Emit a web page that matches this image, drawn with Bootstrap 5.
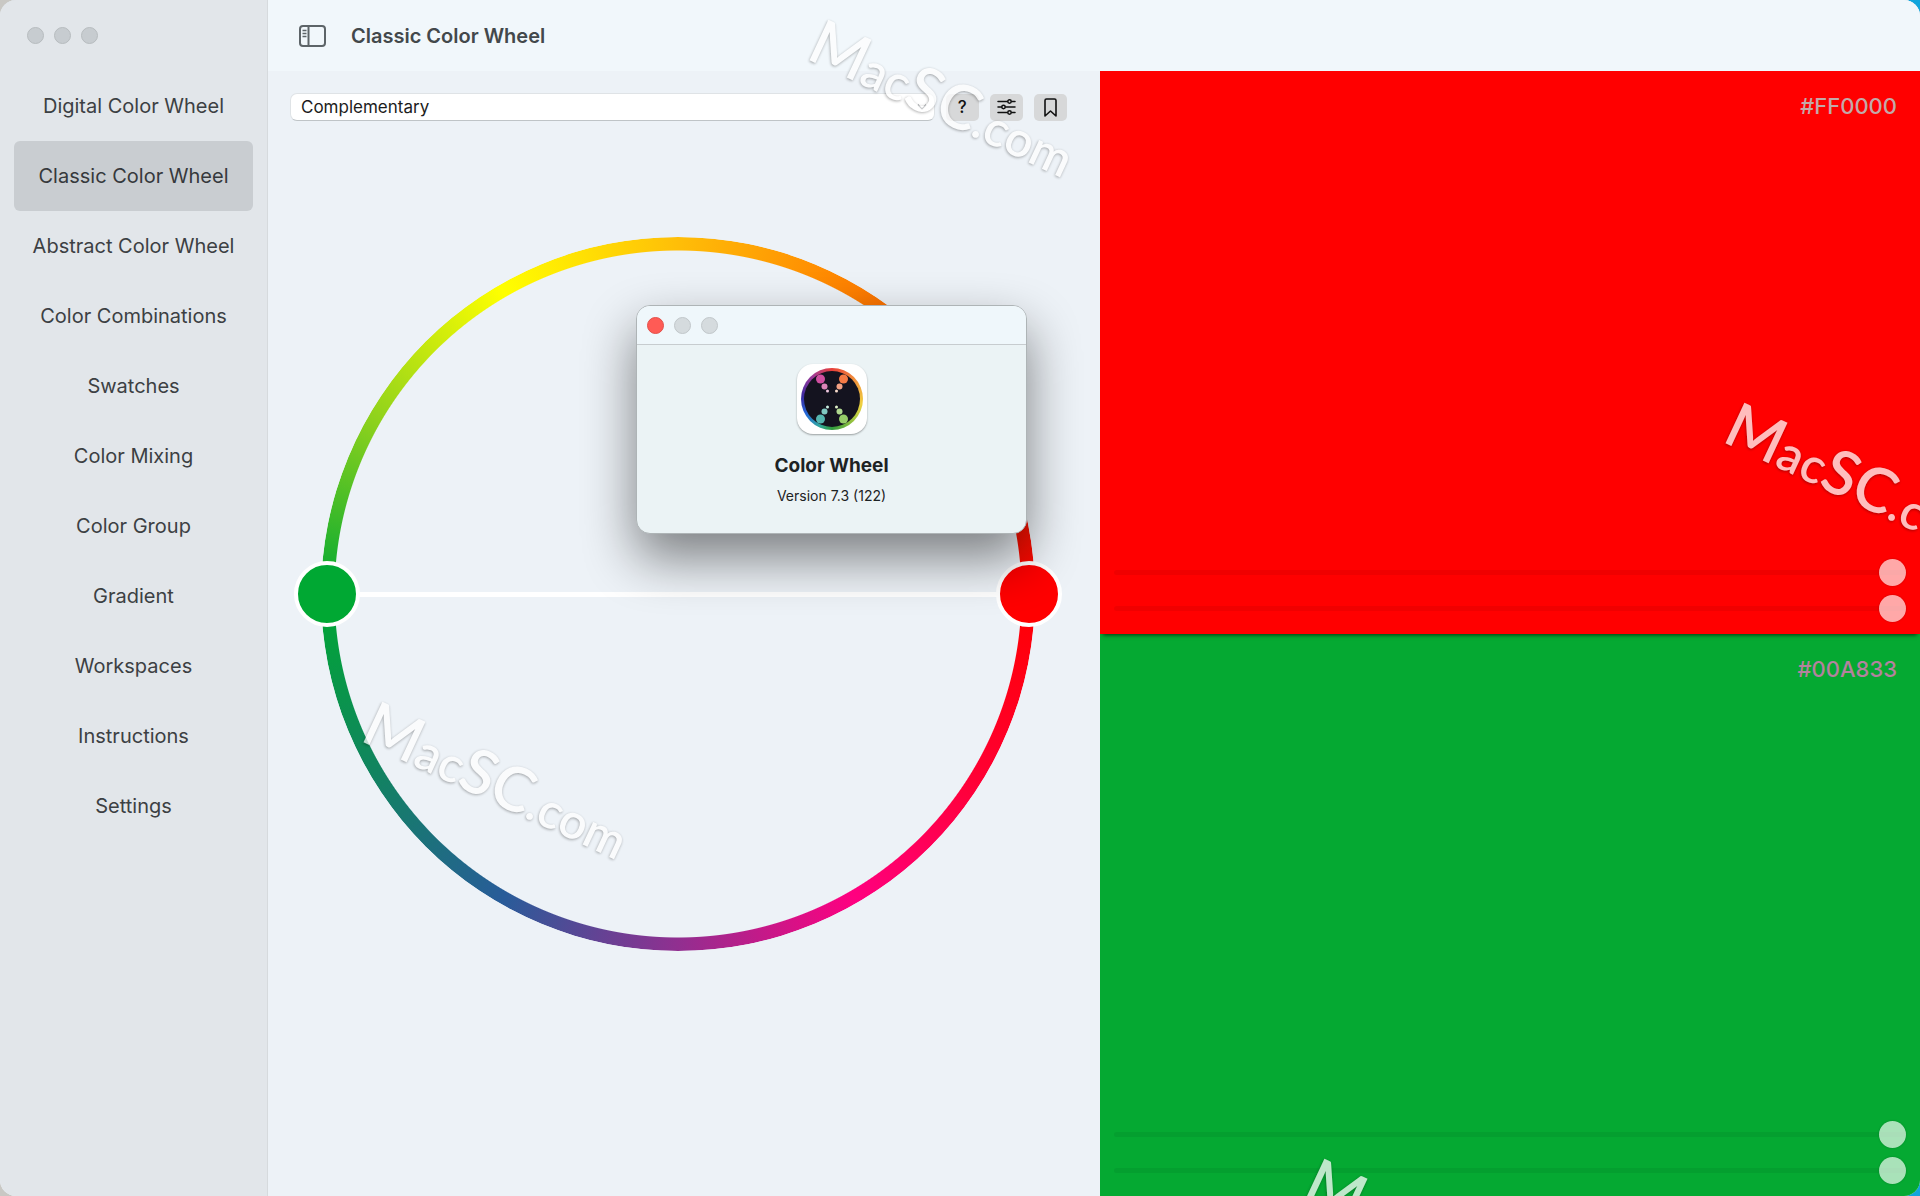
<!DOCTYPE html>
<html lang="en">
<head>
<meta charset="utf-8">
<meta name="viewport" content="width=device-width, initial-scale=1">
<title>Classic Color Wheel</title>
<link href="https://cdn.jsdelivr.net/npm/bootstrap@5.3.0/dist/css/bootstrap.min.css" rel="stylesheet">
<style>
body { font-family: Inter, "Liberation Sans", sans-serif; background: linear-gradient(90deg, #c9c8c4 50%, #12a5dc 50%); }
.app-window { border-radius: 16px; background: #edf2f7; box-shadow: inset 0 1px #d3d9dc; }
.side-pane { width: 268px; flex: none; background: #e2e6ea; border-right: 1px solid #d6dadd; padding: 0 14px; }
.light-row { gap: 10px; }
.light-row i { width: 17px; height: 17px; border-radius: 50%; background: #c7ccd0; border: 1px solid #b7bcbf; }
.side-pane .light-row { height: 71px; padding-left: 13px; }
.side-link { height: 70px; border-radius: 6px; font-size: 20px; color: #3c4043; --bs-nav-link-padding-x: 0; }
.side-link:hover { color: #202326; }
.side-link.active { background: #c9cdd1; color: #36393c; }
.title-bar { height: 71px; background: #f1f7fb; padding: 0 31px; gap: 25px; }
.title-bar h1 { font-size: 20px; font-weight: 600; color: #43484b; }
.wheel-pane { width: 50.35%; flex: none; padding: 22px 33px 22px 22px; }
.tool-row { gap: 11px; height: 28px; }
.rule-select { height: 28px; border: 1px solid #dfe3e6; border-bottom-color: #bfc4c7; border-radius: 7px; font-size: 17px; line-height: 26px; color: #1c1c1c; padding: 0 30px 0 10px; background-color: #fff; background-size: 12px 10px; background-position: right 6px center; }
.tool-btn { width: 33px; height: 27px; flex: none; background: #d7d8d9; border: 0; border-radius: 5px; color: #111; font-size: 17px; font-weight: 500; line-height: 27px; }
.wheel { width: 714px; max-width: 92%; aspect-ratio: 1; margin: 116px auto 0; }
.wheel-ring { inset: 0; border-radius: 50%;
  background: conic-gradient(from 90deg, #f00 0deg, #ff0030 30deg, #ff0080 60deg, #912f90 90deg, #285c99 120deg, #11845f 150deg, #00a833 180deg, #8fd21c 210deg, #ff0 240deg, #ffbe08 270deg, #ff8000 300deg, #e63200 330deg, #f00 360deg);
  -webkit-mask: radial-gradient(closest-side, transparent calc(100% - 14px), #000 calc(100% - 13px)); mask: radial-gradient(closest-side, transparent calc(100% - 14px), #000 calc(100% - 13px)); }
.wheel-axis { left: 7px; right: 7px; top: 50%; height: 5px; margin-top: -2px; background: #fff; }
.wheel-knob { width: 66px; height: 66px; border: 4px solid #fff; border-radius: 50%; padding: 0; top: 50%; margin-top: -33px; }
.knob-a { left: -27px; background: #00a833; }
.knob-b { right: -27px; background: #f00; }
.about-box { left: 368px; top: 234px; width: 391px; height: 229px; border: 1px solid #aeb4b6; border-radius: 14px; background: #ebf3f5; box-shadow: 0 24px 52px rgba(0,0,0,.48); color: #1d2224; }
.about-box .light-row { height: 39px; padding-left: 10px; background: #eff7fb; border-bottom: 1px solid #c7cccf; border-radius: 13px 13px 0 0; }
.about-box .light-row i { background: #d5dbde; border-color: #c1c7ca; }
.about-box .light-row i:first-child { background: #ff5b55; border-color: #e2504a; }
.about-box h2 { font-size: 19px; line-height: 24px; font-weight: 700; margin: 20px 0 8px; }
.about-box p { font-size: 14px; line-height: 20px; }
.app-icon { margin-top: 19px; width: 70px; height: 70px; border-radius: 16px; background: #fff; box-shadow: 0 1px 2px rgba(0,0,0,.35); }
.app-ring { width: 62px; height: 62px; border-radius: 50%; background: conic-gradient(#e8403a, #f08a3a 45deg, #f0d040 100deg, #a8c840 130deg, #2f9a3c 180deg, #30a8a0 205deg, #2468d8 240deg, #3a2aa0 275deg, #a03a98 320deg, #e8403a 360deg); }
.swatch { flex: 1 1 0; padding: 18px 14px 12px; }
.swatch-red { background: #f00; color: #c3a9a9; box-shadow: 0 4px 4px -3px rgba(0,0,0,.7); z-index: 1; }
.swatch-green { background: #05a932; color: #b4829f; }
.hex-code { font-size: 22px; line-height: 35px; font-weight: 500; padding-right: 9px; }
.slide { -webkit-appearance: none; appearance: none; display: block; width: 100%; height: 27px; margin: 9px 0 0; background: transparent; }
.slide::-webkit-slider-runnable-track { height: 5px; border-radius: 3px; background: rgba(0,0,0,.06); }
.slide::-webkit-slider-thumb { -webkit-appearance: none; width: 27px; height: 27px; margin-top: -11px; border-radius: 50%; background: rgba(255,255,255,.66); box-shadow: 0 0 2px rgba(0,0,0,.25); }
.stamp { font-family: Lato, sans-serif; font-weight: 600; font-size: 49px; line-height: 60px; color: #fff; opacity: .74; text-shadow: 0 1px 3px rgba(0,0,0,.45); transform: rotate(25deg); transform-origin: 0 100%; white-space: nowrap; pointer-events: none; z-index: 3; }
.stamp b { font-size: 62px; font-weight: 600; }
.stamp-1 { left: 800px; top: 3px; }
.stamp-2 { left: 354px; top: 685px; }
.stamp-3 { left: 1716px; top: 386px; }
.stamp-4 { left: 1296px; top: 1142px; }
</style>
<script src="https://cdn.jsdelivr.net/npm/bootstrap@5.3.0/dist/js/bootstrap.bundle.min.js"></script>
</head>
<body>
<div class="app-window d-flex min-vh-100 position-relative overflow-hidden">
  <aside class="side-pane">
    <div class="light-row d-flex align-items-center"><i></i><i></i><i></i></div>
    <nav class="nav flex-column">
      <a class="nav-link side-link d-flex align-items-center justify-content-center" href="#">Digital Color Wheel</a>
      <a class="nav-link side-link d-flex align-items-center justify-content-center active" aria-current="page" href="#">Classic Color Wheel</a>
      <a class="nav-link side-link d-flex align-items-center justify-content-center" href="#">Abstract Color Wheel</a>
      <a class="nav-link side-link d-flex align-items-center justify-content-center" href="#">Color Combinations</a>
      <a class="nav-link side-link d-flex align-items-center justify-content-center" href="#">Swatches</a>
      <a class="nav-link side-link d-flex align-items-center justify-content-center" href="#">Color Mixing</a>
      <a class="nav-link side-link d-flex align-items-center justify-content-center" href="#">Color Group</a>
      <a class="nav-link side-link d-flex align-items-center justify-content-center" href="#">Gradient</a>
      <a class="nav-link side-link d-flex align-items-center justify-content-center" href="#">Workspaces</a>
      <a class="nav-link side-link d-flex align-items-center justify-content-center" href="#">Instructions</a>
      <a class="nav-link side-link d-flex align-items-center justify-content-center" href="#">Settings</a>
    </nav>
  </aside>
  <div class="flex-grow-1 d-flex flex-column">
    <header class="title-bar d-flex align-items-center">
      <button type="button" class="btn p-0 border-0 d-flex" aria-label="Toggle sidebar">
        <svg width="27" height="22" viewBox="0 0 27 22" fill="none" stroke="#5d6468" stroke-width="2"><rect x="1" y="1" width="25" height="20" rx="3"/><path d="M9.500 1v20"/><path d="M3.500 5.500h4M3.500 8.500h4M3.500 11.500h4" stroke-width="1.300"/></svg>
      </button>
      <h1 class="mb-0">Classic Color Wheel</h1>
    </header>
    <div class="d-flex flex-grow-1">
      <main class="wheel-pane position-relative">
        <div class="tool-row d-flex align-items-center">
          <select class="form-select rule-select flex-grow-1" aria-label="Color rule"><option>Complementary</option></select>
          <button type="button" class="tool-btn p-0" aria-label="Help">?</button>
          <button type="button" class="tool-btn p-0 d-flex align-items-center justify-content-center" aria-label="Adjust">
            <svg width="19" height="16" viewBox="0 0 19 16" fill="#d7d8d9" stroke="#111" stroke-width="1.500" stroke-linecap="round"><path d="M1 2.500h17M1 8h17M1 13.500h17"/><circle cx="12.500" cy="2.500" r="1.700"/><circle cx="6.500" cy="8" r="1.700"/><circle cx="12.500" cy="13.500" r="1.700"/></svg>
          </button>
          <button type="button" class="tool-btn p-0 d-flex align-items-center justify-content-center" aria-label="Bookmark">
            <svg width="13" height="19" viewBox="0 0 13 19" fill="none" stroke="#111" stroke-width="1.600" stroke-linejoin="round"><path d="M1 2.500Q1 1 2.500 1h8Q12 1 12 2.500V18l-5.500-5L1 18z"/></svg>
          </button>
        </div>
        <div class="wheel position-relative">
          <div class="wheel-ring position-absolute"></div>
          <div class="wheel-axis position-absolute"></div>
          <button type="button" class="wheel-knob knob-a position-absolute" aria-label="Green handle"></button>
          <button type="button" class="wheel-knob knob-b position-absolute" aria-label="Red handle"></button>
        </div>
        <section class="about-box position-absolute" aria-label="About">
          <div class="light-row d-flex align-items-center"><i></i><i></i><i></i></div>
          <div class="d-flex flex-column align-items-center">
            <div class="app-icon d-flex align-items-center justify-content-center">
              <div class="app-ring">
                <svg class="d-block" width="62" height="62" viewBox="0 0 62 62"><circle cx="31" cy="31" r="28" fill="#14131f"/><circle cx="19.500" cy="11" r="4.500" fill="#d04fa0"/><circle cx="23.500" cy="18.500" r="3" fill="#dd85b8"/><circle cx="26.500" cy="23" r="1.500" fill="#f0c8e0"/><circle cx="42.500" cy="11" r="4.500" fill="#f57a45"/><circle cx="38.500" cy="18.500" r="3" fill="#f3a184"/><circle cx="35.500" cy="23" r="1.500" fill="#f8dccc"/><circle cx="19.500" cy="51" r="4.500" fill="#55b5b0"/><circle cx="23.500" cy="43.500" r="3" fill="#80c8c2"/><circle cx="26.500" cy="39" r="1.500" fill="#c8ecdf"/><circle cx="42.500" cy="51" r="4.500" fill="#96cc68"/><circle cx="38.500" cy="43.500" r="3" fill="#b0d890"/><circle cx="35.500" cy="39" r="1.500" fill="#dff0c8"/></svg>
              </div>
            </div>
            <h2>Color Wheel</h2>
            <p class="mb-0">Version 7.3 (122)</p>
          </div>
        </section>
      </main>
      <div class="flex-grow-1 d-flex flex-column overflow-hidden">
        <section class="swatch swatch-red d-flex flex-column position-relative">
          <div class="hex-code text-end mb-auto">#FF0000</div>
          <input class="slide" type="range" value="100" aria-label="Red saturation">
          <input class="slide" type="range" value="100" aria-label="Red brightness">
        </section>
        <section class="swatch swatch-green d-flex flex-column">
          <div class="hex-code text-end mb-auto">#00A833</div>
          <input class="slide" type="range" value="100" aria-label="Green saturation">
          <input class="slide" type="range" value="100" aria-label="Green brightness">
        </section>
      </div>
    </div>
  </div>
  <div class="stamp stamp-1 position-absolute"><b>M</b>ac<b>SC</b>.com</div>
  <div class="stamp stamp-2 position-absolute"><b>M</b>ac<b>SC</b>.com</div>
  <div class="stamp stamp-3 position-absolute"><b>M</b>ac<b>SC</b>.com</div>
  <div class="stamp stamp-4 position-absolute"><b>M</b></div>
</div>
</body>
</html>
